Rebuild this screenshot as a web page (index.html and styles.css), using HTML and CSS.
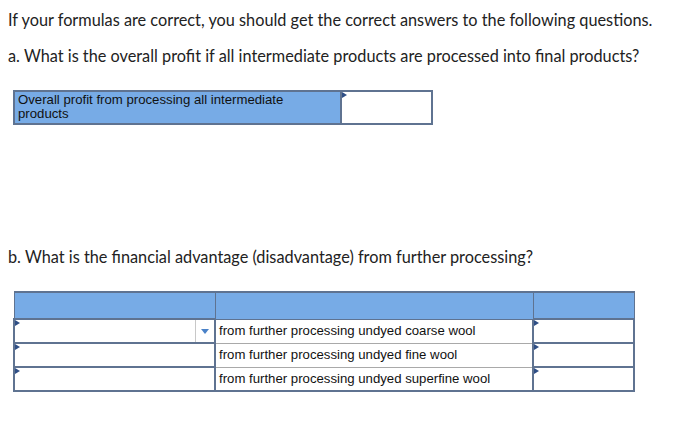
FILE: index.html
```html
<!DOCTYPE html>
<html lang="en">
<head>
    <meta charset="UTF-8">
    <title>Questions</title>
    <link rel="stylesheet" href="styles.css">
</head>
<body>
    <p class="q q-intro">If your formulas are correct, you should get the correct answers to the following questions.</p>
    <p class="q q-a">a. What is the overall profit if all intermediate products are processed into final products?</p>

    <table class="grid grid-a">
        <tr>
            <td class="label">Overall profit from processing all intermediate products</td>
            <td class="input"><span class="flag"></span></td>
        </tr>
    </table>

    <p class="q q-b">b. What is the financial advantage (disadvantage) from further processing?</p>

    <table class="grid grid-b">
        <tr class="head">
            <th class="c1"></th>
            <th class="c2"></th>
            <th class="c3"></th>
        </tr>
        <tr>
            <td class="input select"><span class="flag"></span><span class="arrow"></span></td>
            <td class="text">from further processing undyed coarse wool</td>
            <td class="input"><span class="flag"></span></td>
        </tr>
        <tr>
            <td class="input"><span class="flag"></span></td>
            <td class="text">from further processing undyed fine wool</td>
            <td class="input"><span class="flag"></span></td>
        </tr>
        <tr>
            <td class="input"><span class="flag"></span></td>
            <td class="text">from further processing undyed superfine wool</td>
            <td class="input"><span class="flag"></span></td>
        </tr>
    </table>
</body>
</html>
```

FILE: styles.css
```css
body {
    margin: 0;
    padding: 0 8px;
    font-family: Lato, "Open Sans", sans-serif;
    color: #222;
    background: white;
}
.q {
    margin: 0;
    font-size: 16.3px;
    line-height: 20px;
}
.q-intro {
    padding-top: 10px;
}
.q-a {
    margin-top: 16px;
}
.q-b {
    margin-top: 122px;
}
.grid {
    border-collapse: collapse;
    margin-left: 5px;
    font-family: "Liberation Sans", Arial, sans-serif;
    font-size: 13.2px;
    color: #111;
}
.grid td, .grid th {
    padding: 0;
    position: relative;
}
.grid-a {
    margin-top: 24px;
}
.grid-a .label {
    width: 282px;
    height: 29px;
    padding: 1px 40px 1px 3px;
    line-height: 14px;
    background: #77abe6;
    border: 2px solid #5f7391;
    border-right: none;
    vertical-align: top;
}
.grid-a .input {
    width: 89px;
    background: white;
    border: 2px solid #5f7391;
}
.flag {
    position: absolute;
    left: 0;
    top: 0;
    width: 0;
    height: 0;
    border-top: 3px solid transparent;
    border-bottom: 3px solid transparent;
    border-left: 5px solid #2f4f86;
}
.grid-b {
    margin-top: 24px;
}
.grid-b .head th {
    height: 25px;
    background: #77abe6;
    border: 1px solid #5f7391;
    border-top-width: 2px;
}
.grid-b .c1 { width: 200px; }
.grid-b .c2 { width: 317px; }
.grid-b .c3 { width: 100px; }
.grid-b td {
    height: 22px;
    background: white;
}
.grid-b td.input {
    border: 2px solid #5f7391;
}
.grid-b td.text {
    border: 1px solid #a9a9a9;
    padding-left: 3px;
    line-height: 20px;
}
.grid-b tr:last-child td.text {
    border-bottom: 2px solid #5f7391;
}
.select .arrow {
    position: absolute;
    right: 0;
    top: 0;
    bottom: 0;
    width: 18px;
    border-left: 1px solid #c8c8c8;
}
.select .arrow::after {
    content: "";
    position: absolute;
    left: 5px;
    top: 9px;
    border-left: 4px solid transparent;
    border-right: 4px solid transparent;
    border-top: 5px solid #4a82c8;
}
```
